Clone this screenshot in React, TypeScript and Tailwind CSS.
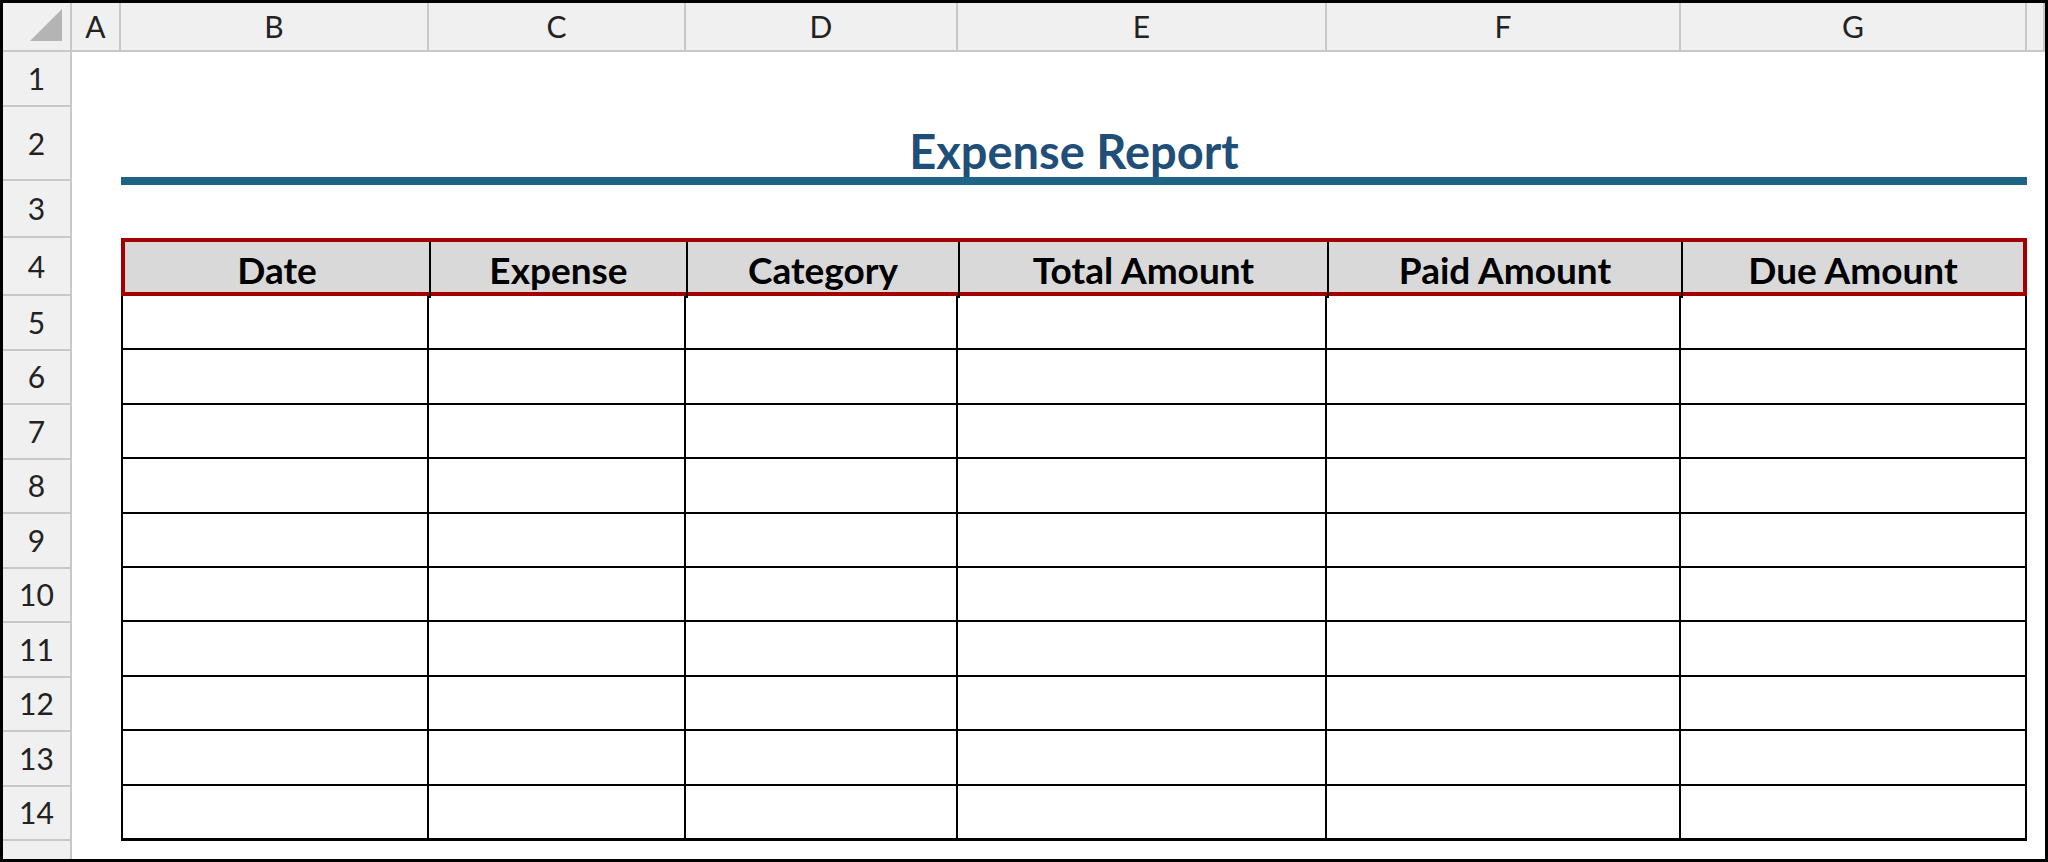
export default function App() {
  const cols = ["A", "B", "C", "D", "E", "F", "G", ""];
  const heads = ["Date", "Expense", "Category", "Total Amount", "Paid Amount", "Due Amount"];
  const rows = Array.from({ length: 14 }, (_, i) => i + 1);
  const rowH = ["55px", "74px", "57px", "58px", ...Array(10).fill("54.5px")];
  return (
    <div className="w-[2048px] h-[862px] bg-black p-[3px] overflow-hidden" style={{ fontFamily: "Lato, 'Liberation Sans', sans-serif" }}>
      <div
        className="grid bg-white w-full h-full"
        style={{
          gridTemplateColumns: "69px 49px 308px 257px 272px 369px 354px 346px 1fr",
          gridTemplateRows: `49px ${rowH.join(" ")} 1fr`,
        }}
      >
        <div className="bg-[#f0f0f0] border-r-2 border-b-2 border-[#c8c8c8] relative">
          <div className="absolute right-[8px] bottom-[9px] w-0 h-0 border-l-[32px] border-l-transparent border-b-[32px] border-b-[#b4b4b4]" />
        </div>
        {cols.map((c, i) => (
          <div key={i} className="bg-[#f0f0f0] border-r-2 border-b-2 border-[#c8c8c8] flex items-center justify-center text-[30px] text-[#222]">{c}</div>
        ))}
        {rows.map((r) => (
          <div key={r} className="bg-[#f0f0f0] border-r-2 border-b-2 border-[#c8c8c8] flex items-center justify-center text-[30px] text-[#222]" style={{ gridColumn: 1, gridRow: r + 1 }}>{r}</div>
        ))}
        <div className="bg-[#f0f0f0] border-r-2 border-[#c8c8c8]" style={{ gridColumn: 1, gridRow: 16 }} />
        <div className="flex flex-col" style={{ gridColumn: "3 / 9", gridRow: "3 / 5" }}>
          <div className="h-[70px] flex items-end justify-center pb-[2px] text-[47px] leading-none font-bold text-[#1f4e79]">Expense Report</div>
          <div className="h-[8px] bg-[#1f6387]" />
        </div>
        <div className="flex flex-col" style={{ gridColumn: "3 / 9", gridRow: "5 / 16" }}>
          <div className="grid h-[58px] bg-[#d9d9d9] border-4 border-[#a50000]" style={{ gridTemplateColumns: "306px 257px 272px 369px 354px 1fr" }}>
            {heads.map((h, i) => (
              <div key={h} className={`flex items-center justify-center text-[37px] font-bold text-black ${i < 5 ? "border-r-2 border-black" : ""}`}>{h}</div>
            ))}
          </div>
          <div className="flex-1 flex flex-col border-l-2 border-r-2 border-b-[3px] border-black">
            {Array.from({ length: 10 }).map((_, r) => (
              <div key={r} className={`flex-1 grid ${r < 9 ? "border-b-2 border-black" : ""}`} style={{ gridTemplateColumns: "306px 257px 272px 369px 354px 1fr" }}>
                {heads.map((h, i) => (
                  <div key={h} className={i < 5 ? "border-r-2 border-black" : ""} />
                ))}
              </div>
            ))}
          </div>
        </div>
      </div>
    </div>
  );
}
